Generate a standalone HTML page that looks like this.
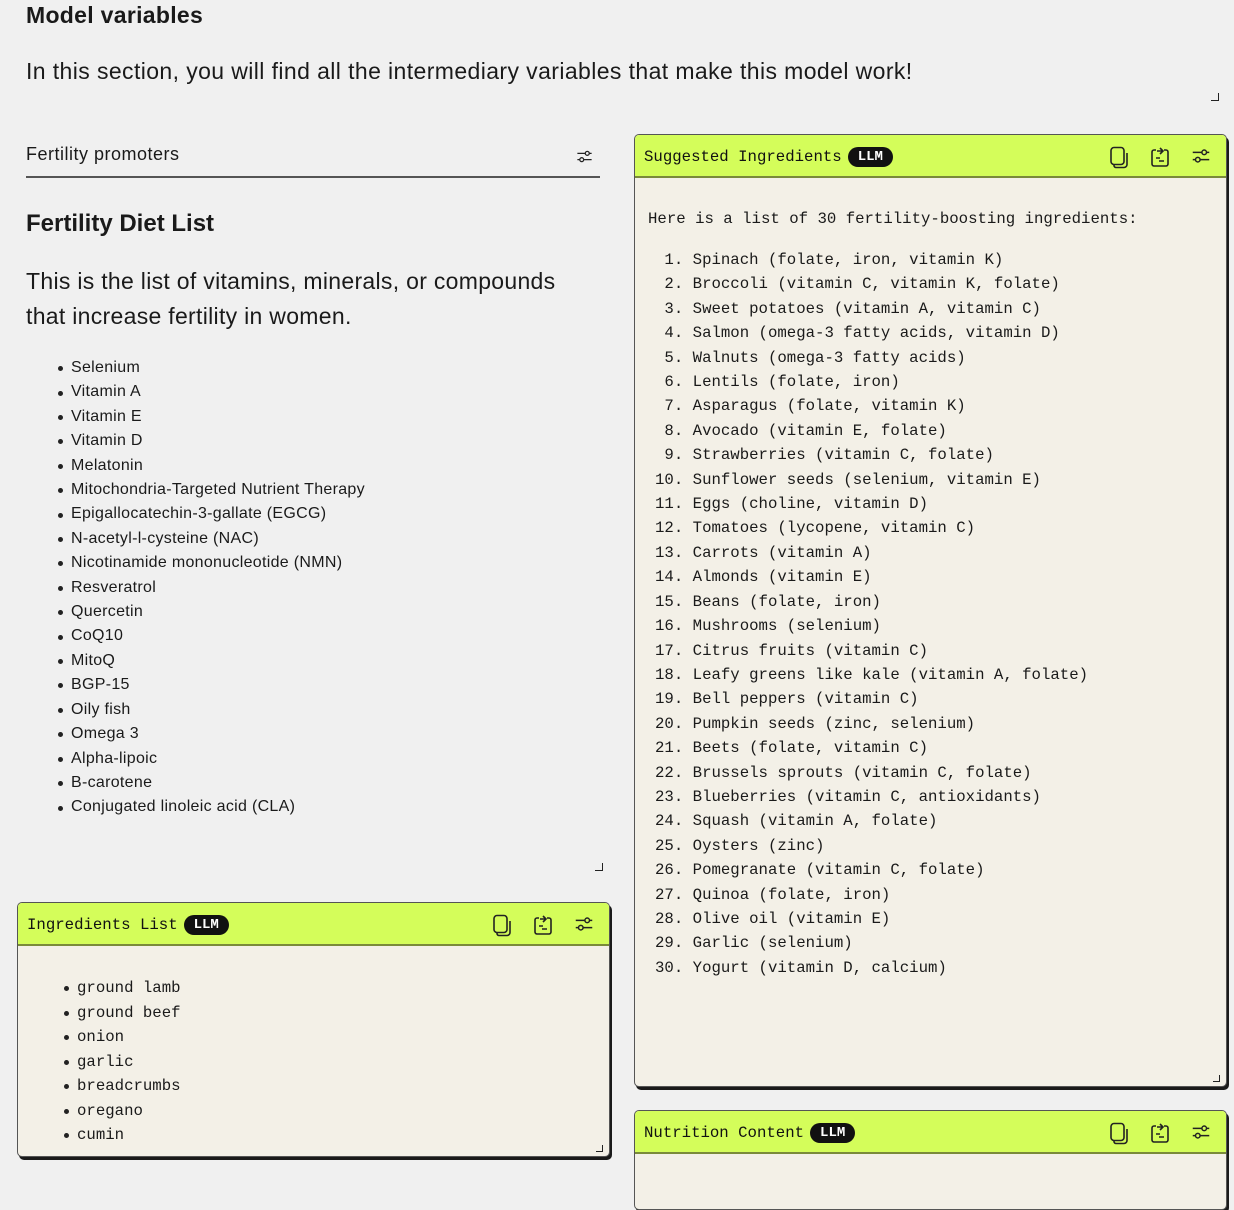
<!DOCTYPE html>
<html><head><meta charset="utf-8"><style>
*{margin:0;padding:0;box-sizing:border-box}
body{width:1234px;height:1174px;background:#f0f0f0;position:relative;overflow:hidden;font-family:"Liberation Sans",sans-serif;color:#1a1a1a}
.a{position:absolute;white-space:nowrap}
.mono{font-family:"Liberation Mono",monospace}
.box{position:absolute;border:1.5px solid #555;border-radius:5px;background:#f3f0e7;box-shadow:2px 3px 0 #1a1a1a;overflow:hidden}
.hd{height:43px;background:#d4fd5a;border-bottom:2px solid #7a8a3a;position:relative}
.hd .t{position:absolute;left:9px;top:12px;font-family:"Liberation Mono",monospace;font-size:15.7px;color:#111}
.llm{display:inline-block;background:#111;color:#fff;border-radius:12px;padding:2px 10px;font-size:14px;font-weight:bold;margin-left:6px;vertical-align:1px}
.ic{position:absolute;top:10px}
.rs{position:absolute;right:6px;bottom:4px;width:7px;height:7px;border-right:1.5px solid #222;border-bottom:1.5px solid #222}
ul.l{position:absolute;list-style:none}
ul.l li{position:relative}
ul.l li:before{content:"";position:absolute;left:-13px;top:50%;margin-top:-2px;width:5px;height:5px;border-radius:50%;background:#222}
</style></head><body>
<svg width="0" height="0" style="position:absolute">
<symbol id="cp" viewBox="0 0 24 24"><rect x="4" y="2.5" width="13" height="17" rx="3" fill="none" stroke="#222" stroke-width="1.6"/><path d="M7 19.5v1a2 2 0 0 0 2 2h8a3 3 0 0 0 3-3V8" fill="none" stroke="#222" stroke-width="1.6"/></symbol>
<symbol id="ex" viewBox="0 0 24 24"><path d="M8 5H6a2 2 0 0 0-2 2v12a2 2 0 0 0 2 2h12a2 2 0 0 0 2-2V7a2 2 0 0 0-2-2h-2M9 6h6M12 3l3 3-3 3M8 13h4M11 16h5" fill="none" stroke="#222" stroke-width="1.6"/></symbol>
<symbol id="sl" viewBox="0 0 24 24"><path d="M3 8h10M18 8h3M3 16h3M11 16h10" fill="none" stroke="#222" stroke-width="1.6"/><circle cx="15.5" cy="8" r="2.5" fill="none" stroke="#222" stroke-width="1.6"/><circle cx="8.5" cy="16" r="2.5" fill="none" stroke="#222" stroke-width="1.6"/></symbol>
</svg>

<div class="a" style="left:26px;top:2px;font-size:23px;font-weight:bold;letter-spacing:0.3px">Model variables</div>
<div class="a" style="left:26px;top:58px;font-size:23px;letter-spacing:0.4px">In this section, you will find all the intermediary variables that make this model work!</div>
<div class="a" style="left:1211px;top:93px;width:8px;height:8px;border-right:1.5px solid #222;border-bottom:1.5px solid #222"></div>

<div class="a" style="left:26px;top:144px;font-size:18px;letter-spacing:0.5px">Fertility promoters</div>
<svg class="a" style="left:575px;top:147px" width="19" height="19"><use href="#sl"/></svg>
<div class="a" style="left:26px;top:176px;width:574px;height:1.5px;background:#555"></div>
<div class="a" style="left:26px;top:210px;font-size:24px;font-weight:bold">Fertility Diet List</div>
<div class="a" style="left:26px;top:264px;font-size:23px;letter-spacing:0.3px;line-height:35px">This is the list of vitamins, minerals, or compounds<br>that increase fertility in women.</div>
<ul class="l" style="left:71px;top:356px;font-size:16px;letter-spacing:0.3px;line-height:24.4px">
<li>Selenium</li><li>Vitamin A</li><li>Vitamin E</li><li>Vitamin D</li><li>Melatonin</li><li>Mitochondria-Targeted Nutrient Therapy</li><li>Epigallocatechin-3-gallate (EGCG)</li><li>N-acetyl-l-cysteine (NAC)</li><li>Nicotinamide mononucleotide (NMN)</li><li>Resveratrol</li><li>Quercetin</li><li>CoQ10</li><li>MitoQ</li><li>BGP-15</li><li>Oily fish</li><li>Omega 3</li><li>Alpha-lipoic</li><li>B-carotene</li><li>Conjugated linoleic acid (CLA)</li>
</ul>
<div class="a" style="left:595px;top:863px;width:8px;height:8px;border-right:1.5px solid #222;border-bottom:1.5px solid #222"></div>

<div class="box" style="left:17px;top:902px;width:593px;height:255px">
<div class="hd"><div class="t">Ingredients List<span class="llm">LLM</span></div>
<svg class="ic" style="left:472px" width="24" height="24"><use href="#cp"/></svg>
<svg class="ic" style="left:513px" width="24" height="24"><use href="#ex"/></svg>
<svg class="ic" style="left:555px" width="22" height="22"><use href="#sl"/></svg></div>
<ul class="l mono" style="left:59px;top:73px;font-size:15.7px;line-height:24.5px">
<li>ground lamb</li><li>ground beef</li><li>onion</li><li>garlic</li><li>breadcrumbs</li><li>oregano</li><li>cumin</li></ul>
<div class="rs"></div>
</div>

<div class="box" style="left:634px;top:134px;width:593px;height:953px">
<div class="hd"><div class="t">Suggested Ingredients<span class="llm">LLM</span></div>
<svg class="ic" style="left:472px" width="24" height="24"><use href="#cp"/></svg>
<svg class="ic" style="left:513px" width="24" height="24"><use href="#ex"/></svg>
<svg class="ic" style="left:555px" width="22" height="22"><use href="#sl"/></svg></div>
<div class="a mono" style="left:13px;top:75px;font-size:15.7px">Here is a list of 30 fertility-boosting ingredients:</div>
<div class="a mono" style="left:20px;top:113px;font-size:15.7px;line-height:24.4px;white-space:pre"> 1. Spinach (folate, iron, vitamin K)
 2. Broccoli (vitamin C, vitamin K, folate)
 3. Sweet potatoes (vitamin A, vitamin C)
 4. Salmon (omega-3 fatty acids, vitamin D)
 5. Walnuts (omega-3 fatty acids)
 6. Lentils (folate, iron)
 7. Asparagus (folate, vitamin K)
 8. Avocado (vitamin E, folate)
 9. Strawberries (vitamin C, folate)
10. Sunflower seeds (selenium, vitamin E)
11. Eggs (choline, vitamin D)
12. Tomatoes (lycopene, vitamin C)
13. Carrots (vitamin A)
14. Almonds (vitamin E)
15. Beans (folate, iron)
16. Mushrooms (selenium)
17. Citrus fruits (vitamin C)
18. Leafy greens like kale (vitamin A, folate)
19. Bell peppers (vitamin C)
20. Pumpkin seeds (zinc, selenium)
21. Beets (folate, vitamin C)
22. Brussels sprouts (vitamin C, folate)
23. Blueberries (vitamin C, antioxidants)
24. Squash (vitamin A, folate)
25. Oysters (zinc)
26. Pomegranate (vitamin C, folate)
27. Quinoa (folate, iron)
28. Olive oil (vitamin E)
29. Garlic (selenium)
30. Yogurt (vitamin D, calcium)</div>
<div class="rs"></div>
</div>

<div class="box" style="left:634px;top:1110px;width:593px;height:100px">
<div class="hd"><div class="t">Nutrition Content<span class="llm">LLM</span></div>
<svg class="ic" style="left:472px" width="24" height="24"><use href="#cp"/></svg>
<svg class="ic" style="left:513px" width="24" height="24"><use href="#ex"/></svg>
<svg class="ic" style="left:555px" width="22" height="22"><use href="#sl"/></svg></div>
</div>
</body></html>
